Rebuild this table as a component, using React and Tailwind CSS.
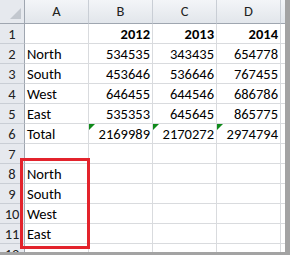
import React from "react";

const cols = ["A", "B", "C", "D"];
const rows = [
  ["", "2012", "2013", "2014"],
  ["North", "534535", "343435", "654778"],
  ["South", "453646", "536646", "767455"],
  ["West", "646455", "644546", "686786"],
  ["East", "535353", "645645", "865775"],
  ["Total", "2169989", "2170272", "2974794"],
  ["", "", "", ""],
  ["North", "", "", ""],
  ["South", "", "", ""],
  ["West", "", "", ""],
  ["East", "", "", ""],
  ["", "", "", ""],
];

function Tri() {
  return (
    <span className="absolute left-0 top-0 w-0 h-0 border-t-[6px] border-r-[6px] border-t-[#0f8a1a] border-r-transparent" />
  );
}

export default function App() {
  return (
    <div className="w-[290px] h-[255px] bg-[#a3a3a3] font-[Carlito,Lato,sans-serif] text-[14.5px] text-black">
      <div className="relative w-[285px] h-[252px] bg-white overflow-hidden">
        <div className="grid grid-cols-[25px_64px_64px_64px_64px_20px] auto-rows-[20px] grid-rows-[24px]">
          <div className="relative h-[24px] bg-[#e6e9ee] border-r border-b border-[#9fa6b0]">
            <span className="absolute right-[3px] bottom-[4px] w-0 h-0 border-l-[11px] border-t-[11px] border-l-transparent border-t-transparent border-b-0 border-r-0" />
            <svg className="absolute right-[3px] bottom-[4px]" width="11" height="11" viewBox="0 0 11 11">
              <polygon points="11,0 11,11 0,11" fill="#c2c7ce" />
            </svg>
          </div>
          {cols.map((c) => (
            <div
              key={c}
              className="h-[24px] flex items-center justify-center bg-gradient-to-b from-[#f3f5f8] to-[#e2e6eb] border-r border-r-[#c9ced5] border-b border-b-[#9fa6b0] text-[#222]"
            >
              {c}
            </div>
          ))}
          <div className="h-[24px] bg-gradient-to-b from-[#f3f5f8] to-[#e2e6eb] border-b border-b-[#9fa6b0]" />
          {rows.map((r, i) => (
            <React.Fragment key={i}>
              <div className="h-[20px] flex items-center justify-center bg-[#e6e9ee] border-r border-r-[#9fa6b0] border-b border-b-[#c9ced5] text-[#222] leading-none pt-[1px]">
                {i + 1}
              </div>
              {r.map((v, j) => (
                <div
                  key={j}
                  className={
                    "relative h-[20px] flex items-center border-r border-b border-[#d9dbde] leading-none pt-[1px] " +
                    (j === 0 ? "justify-start pl-[2px]" : "justify-end pr-[2px]") +
                    (i === 0 ? " font-bold" : "")
                  }
                >
                  {i === 5 && j > 0 ? <Tri /> : null}
                  {v}
                </div>
              ))}
              <div className="h-[20px] border-b border-[#d9dbde]" />
            </React.Fragment>
          ))}
        </div>
        <div className="absolute left-[20px] top-[158px] w-[70px] h-[91px] border-[3px] border-[#e3232c]" />
      </div>
    </div>
  );
}
